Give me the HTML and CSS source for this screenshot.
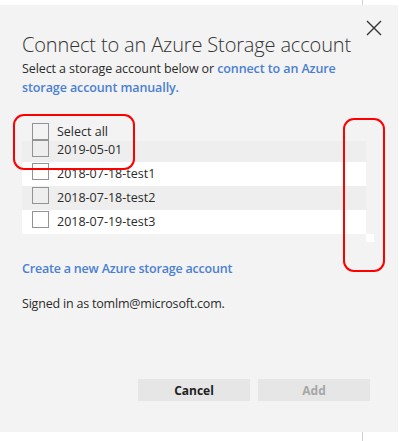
FILE: index.html
```html
<!DOCTYPE html>
<html lang="en">
<head>
    <meta charset="UTF-8">
    <meta name="viewport" content="width=device-width, initial-scale=1.0">
    <title>Connect to an Azure Storage account</title>
    <link rel="stylesheet" href="styles.css">
</head>
<body>
    <div class="top-strip"><span class="strip-line"></span></div>

    <div class="dialog">
        <button class="close" aria-label="Close">
            <svg width="16" height="16" viewBox="0 0 16 16">
                <path d="M1 1 L15 15 M15 1 L1 15" stroke="#333" stroke-width="1.4" fill="none"/>
            </svg>
        </button>

        <h1 class="title">Connect to an Azure Storage account</h1>
        <p class="subtitle">Select a storage account below or <a href="#">connect to an Azure storage account manually.</a></p>

        <div class="select-all">
            <span class="box"></span>
            <span>Select all</span>
        </div>

        <div class="list-wrap">
            <ul class="list">
                <li class="row first"><span class="box"></span><span>2019-05-01</span></li>
                <li class="row"><span class="box"></span><span>2018-07-18-test1</span></li>
                <li class="row"><span class="box"></span><span>2018-07-18-test2</span></li>
                <li class="row"><span class="box"></span><span>2018-07-19-test3</span></li>
            </ul>
            <span class="corner"></span>
        </div>

        <a class="create" href="#">Create a new Azure storage account</a>
        <p class="signed">Signed in as tomlm@microsoft.com.</p>

        <div class="actions">
            <button class="btn">Cancel</button>
            <button class="btn" disabled>Add</button>
        </div>

        <span class="mark mark-left"></span>
        <span class="mark mark-right"></span>
    </div>

    <div class="bottom-strip"><span class="strip-line"></span></div>
</body>
</html>
```

FILE: styles.css
```css
body {
    margin: 0;
    background: #fff;
    font-family: "Open Sans", "Noto Sans", sans-serif;
    color: #2b2b2b;
    width: 399px;
    height: 441px;
    overflow: hidden;
}
.top-strip,
.bottom-strip {
    height: 5px;
    padding-left: 362px;
}
.bottom-strip {
    height: 9px;
}
.strip-line {
    display: block;
    width: 1px;
    height: 100%;
    background: #cfcfcf;
}
.dialog {
    position: relative;
    box-sizing: border-box;
    width: 398px;
    height: 427px;
    background: #f3f3f3;
    padding: 26px 28px 0 22px;
}
.close {
    position: absolute;
    top: 15px;
    right: 16px;
    width: 16px;
    height: 16px;
    padding: 0;
    border: none;
    background: none;
}
.close svg {
    display: block;
}
.title {
    margin: 0;
    font-size: 20px;
    font-weight: 300;
    line-height: 28px;
    color: #333;
    letter-spacing: -0.15px;
}
.subtitle {
    margin: 0;
    font-size: 12.5px;
    line-height: 19px;
    letter-spacing: -0.1px;
    width: 330px;
}
.subtitle a,
.create {
    color: #4a7fd2;
    font-weight: 600;
    text-decoration: none;
}
.select-all {
    display: flex;
    align-items: center;
    margin-top: 24px;
    height: 20px;
    padding-left: 10px;
    font-size: 12.5px;
}
.box {
    box-sizing: border-box;
    width: 17px;
    height: 17px;
    border: 1.5px solid #939393;
    background: #f3f3f3;
    margin-right: 8px;
    flex: none;
}
.list-wrap {
    position: relative;
    width: 344px;
}
.list {
    list-style: none;
    margin: 0;
    padding: 0;
    font-size: 12.5px;
}
.row {
    display: flex;
    align-items: flex-start;
    height: 24px;
    padding-left: 10px;
    line-height: 24px;
    background: #fff;
}
.row .box {
    margin-top: 1px;
    background: #fff;
}
.row:nth-child(odd) {
    background: #eeeeee;
}
.row:nth-child(odd) .box {
    background: #eeeeee;
}
.row.first {
    height: 21px;
    line-height: 18px;
}
.row.first .box {
    margin-top: -1px;
}
.corner {
    position: absolute;
    right: -8px;
    bottom: -8px;
    width: 8px;
    height: 8px;
    background: #fff;
}
.create {
    display: block;
    margin-top: 26px;
    font-size: 12.5px;
    line-height: 18px;
    letter-spacing: -0.2px;
}
.signed {
    margin: 17px 0 0;
    font-size: 12.5px;
    line-height: 18px;
    letter-spacing: -0.2px;
}
.actions {
    display: flex;
    justify-content: flex-end;
    gap: 8px;
    margin-top: 66px;
}
.btn {
    width: 112px;
    height: 22px;
    border: none;
    background: #e6e6e6;
    font-family: "Open Sans", "Noto Sans", sans-serif;
    font-size: 12px;
    font-weight: 700;
    color: #222;
    padding: 0;
}
.btn:disabled {
    color: #a6a6a6;
}
.mark {
    position: absolute;
    border: 2px solid #ff0000;
    border-radius: 11px;
}
.mark-left {
    left: 13px;
    top: 109px;
    width: 118px;
    height: 52px;
}
.mark-right {
    left: 343px;
    top: 113px;
    width: 38px;
    height: 150px;
}
```
